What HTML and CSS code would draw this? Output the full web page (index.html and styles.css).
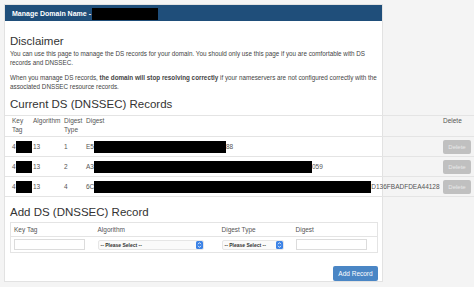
FILE: index.html
```html
<!DOCTYPE html>
<html lang="en">
<head>
    <meta charset="UTF-8">
    <title>Manage DS Records</title>
    <link rel="stylesheet" href="styles.css">
</head>
<body>
    <div class="page">
        <div class="panel">
            <div class="panel-heading">
                <span>Manage Domain Name -</span>
                <span class="redact redact-title"></span>
            </div>
            <div class="panel-body">
                <h3 class="first">Disclaimer</h3>
                <p>You can use this page to manage the DS records for your domain. You should only use this page if you are comfortable with DS records and DNSSEC.</p>
                <p>When you manage DS records, <strong>the domain will stop resolving correctly</strong> if your nameservers are not configured correctly with the associated DNSSEC resource records.</p>

                <h3 class="current">Current DS (DNSSEC) Records</h3>
                <table class="records">
                    <colgroup>
                        <col class="c-key">
                        <col class="c-alg">
                        <col class="c-type">
                        <col class="c-digest">
                        <col class="c-del">
                    </colgroup>
                    <thead>
                        <tr>
                            <th>Key Tag</th>
                            <th>Algorithm</th>
                            <th>Digest Type</th>
                            <th>Digest</th>
                            <th>Delete</th>
                        </tr>
                    </thead>
                    <tbody>
                        <tr>
                            <td>4<span class="redact redact-key"></span></td>
                            <td>13</td>
                            <td>1</td>
                            <td>E5<span class="redact redact-d1"></span>88</td>
                            <td><button class="btn-delete">Delete</button></td>
                        </tr>
                        <tr>
                            <td>4<span class="redact redact-key"></span></td>
                            <td>13</td>
                            <td>2</td>
                            <td>A3<span class="redact redact-d2"></span>059</td>
                            <td><button class="btn-delete">Delete</button></td>
                        </tr>
                        <tr>
                            <td>4<span class="redact redact-key"></span></td>
                            <td>13</td>
                            <td>4</td>
                            <td>6C<span class="redact redact-d3"></span>D136FBADFDEA44128</td>
                            <td><button class="btn-delete">Delete</button></td>
                        </tr>
                    </tbody>
                </table>

                <h3 class="add">Add DS (DNSSEC) Record</h3>
                <table class="add-form">
                    <colgroup>
                        <col class="f-key">
                        <col class="f-alg">
                        <col class="f-type">
                        <col class="f-digest">
                    </colgroup>
                    <thead>
                        <tr>
                            <th>Key Tag</th>
                            <th>Algorithm</th>
                            <th>Digest Type</th>
                            <th>Digest</th>
                        </tr>
                    </thead>
                    <tbody>
                        <tr>
                            <td><input type="text" class="input input-key"></td>
                            <td>
                                <div class="select select-alg">
                                    <span>-- Please Select --</span>
                                    <svg class="arrows" width="7" height="8" viewBox="0 0 7 8">
                                        <rect width="7" height="8" rx="1.5" fill="#3b82e6"/>
                                        <path d="M2 3.2 L3.5 1.6 L5 3.2 M2 4.8 L3.5 6.4 L5 4.8" fill="none" stroke="#fff" stroke-width="0.8"/>
                                    </svg>
                                </div>
                            </td>
                            <td>
                                <div class="select select-type">
                                    <span>-- Please Select --</span>
                                    <svg class="arrows" width="7" height="8" viewBox="0 0 7 8">
                                        <rect width="7" height="8" rx="1.5" fill="#3b82e6"/>
                                        <path d="M2 3.2 L3.5 1.6 L5 3.2 M2 4.8 L3.5 6.4 L5 4.8" fill="none" stroke="#fff" stroke-width="0.8"/>
                                    </svg>
                                </div>
                            </td>
                            <td><input type="text" class="input input-digest"></td>
                        </tr>
                    </tbody>
                </table>
                <div class="actions">
                    <button class="btn-primary">Add Record</button>
                </div>
            </div>
        </div>
    </div>
</body>
</html>
```
FILE: styles.css
```css
html, body {
    margin: 0;
    background: #f4f4f4;
    overflow: hidden;
}
body {
    font-family: "Liberation Sans", Arial, sans-serif;
    color: #444;
}
.page {
    padding: 4px 0 0 4px;
}
.panel {
    width: 377px;
    height: 276px;
    background: #fff;
    border: 1px solid #e2e2e2;
}
.panel-heading {
    display: flex;
    align-items: center;
    height: 16px;
    padding: 0 7px;
    background: #1f4e7a;
    color: #fff;
    font-size: 7px;
    font-weight: bold;
}
.redact {
    display: inline-block;
    background: #000;
    vertical-align: middle;
}
.redact-title {
    width: 66px;
    height: 12px;
    margin: 2px 0 0 1px;
}
.redact-key {
    width: 16px;
    height: 12px;
}
.redact-d1 { width: 132px; height: 12px; }
.redact-d2 { width: 218px; height: 12px; }
.redact-d3 { width: 277px; height: 12px; }

.panel-body {
    padding: 0 5px;
}
h3 {
    font-size: 11.5px;
    font-weight: normal;
    line-height: 14px;
    color: #333;
    margin: 0;
}
h3.first {
    margin: 13px 0 1px;
}
h3.current {
    margin: 6px 0 4px;
}
h3.add {
    margin: 8px 0 3px;
}
p {
    font-size: 6.3px;
    line-height: 9.3px;
    margin: 0 0 5px;
}

.records {
    width: 470px;
    margin-left: -5px;
    border-collapse: collapse;
    table-layout: fixed;
    font-size: 6.5px;
    color: #555;
}
.c-key { width: 25px; }
.c-alg { width: 31px; }
.c-type { width: 22px; }
.c-digest { width: 357px; }
.c-del { width: 35px; }
.records th,
.records td {
    border-top: 1px solid #e4e4e4;
    padding: 0 0 0 3px;
    text-align: left;
    white-space: nowrap;
}
.records th:first-child,
.records td:first-child {
    padding-left: 7px;
}
.records th {
    font-weight: normal;
    vertical-align: top;
    line-height: 9px;
    height: 20px;
    white-space: normal;
}
.records td {
    height: 19px;
    vertical-align: middle;
}
.records tbody tr:last-child td {
    border-bottom: 1px solid #e4e4e4;
}
.btn-delete {
    font-family: inherit;
    font-size: 6px;
    width: 28px;
    height: 14px;
    padding: 0;
    border: none;
    border-radius: 2px;
    background: #c0c0c0;
    color: #e8e8e8;
}

.add-form {
    width: 367px;
    border-collapse: collapse;
    table-layout: fixed;
    border: 1px solid #e4e4e4;
    font-size: 6.5px;
    color: #555;
}
.f-key { width: 84px; }
.f-alg { width: 124px; }
.f-type { width: 74px; }
.f-digest { width: 85px; }
.add-form th {
    font-weight: normal;
    text-align: left;
    height: 13px;
    padding: 0 0 0 3px;
}
.add-form td {
    border-top: 1px solid #e4e4e4;
    height: 15px;
    padding: 0 0 0 3px;
    vertical-align: middle;
}
.input {
    display: block;
    box-sizing: border-box;
    height: 11px;
    border: 1px solid #dcdcdc;
    padding: 0;
    margin: 0;
}
.input-key { width: 71px; }
.input-digest { width: 71px; }
.select {
    display: flex;
    align-items: center;
    justify-content: space-between;
    box-sizing: border-box;
    height: 10px;
    padding: 0 0 0 2px;
    border: 1px solid #e6e6e6;
    border-radius: 2px;
    background: #fafafa;
    font-size: 5px;
    font-weight: bold;
    color: #333;
}
.select-alg { width: 106px; }
.select-type { width: 62px; }
.arrows {
    display: block;
}
.actions {
    text-align: right;
    margin: 9px -1px 0 0;
}
.btn-primary {
    font-family: inherit;
    font-size: 6.5px;
    height: 15px;
    width: 45px;
    padding: 0;
    border: none;
    border-radius: 2px;
    background: #4a86c5;
    color: #fff;
}
```
